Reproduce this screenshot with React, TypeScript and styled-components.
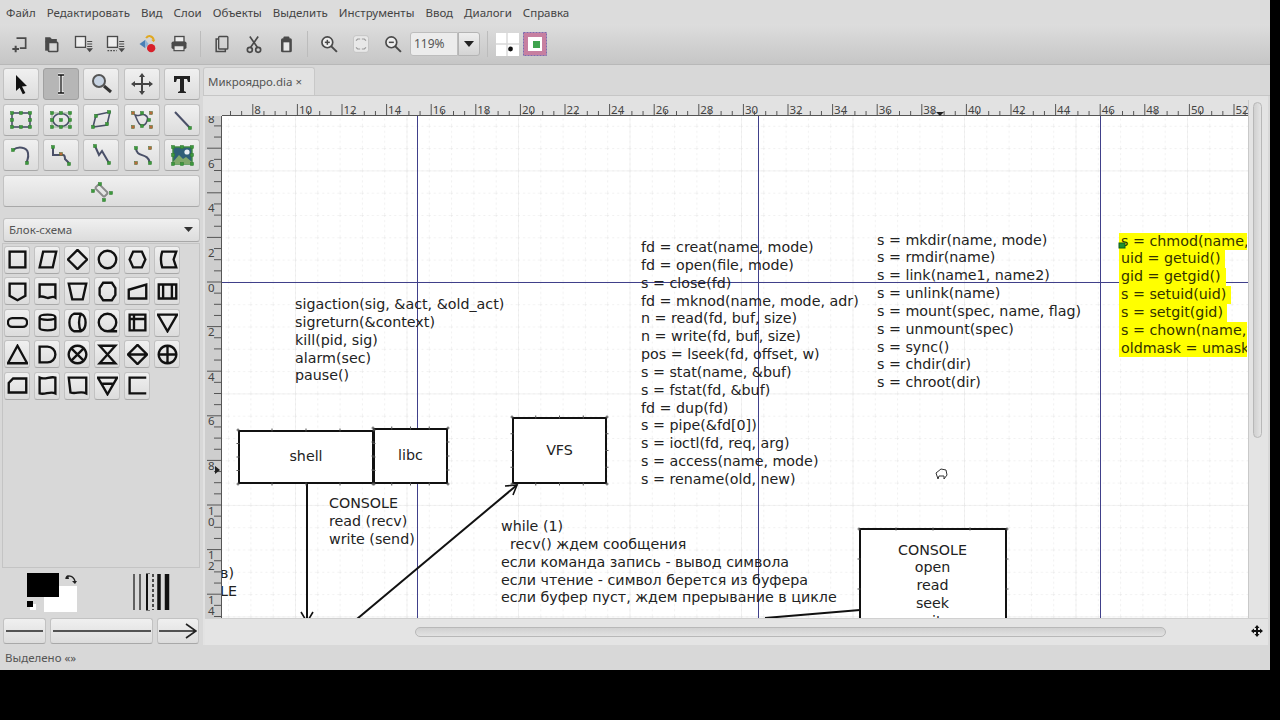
import React from 'react';
import styled, { createGlobalStyle, css } from 'styled-components';

const GlobalStyle = createGlobalStyle`
  html, body {
    margin: 0;
    padding: 0;
    height: 100%;
    background: #000000;
    overflow: hidden;
  }
`;

const uiFont = `"Noto Sans", "Open Sans", sans-serif`;
const canvasFont = `"DejaVu Sans", sans-serif`;
const UNIT = 22.3;

const Window = styled.div`
  width: 1270px;
  height: 670px;
  background: #d8d8d8;
  display: flex;
  flex-direction: column;
  font-family: ${uiFont};
  color: #444444;
  overflow: hidden;
`;

const MenuBar = styled.div`
  height: 24px;
  flex: none;
  display: flex;
  align-items: center;
  padding-left: 6px;
  gap: 11px;
  font-size: 11.5px;
  background: #dcdcdc;
`;

const Toolbar = styled.div`
  height: 41px;
  flex: none;
  box-sizing: border-box;
  display: flex;
  align-items: center;
  padding-left: 3px;
  background: linear-gradient(#dddddd, #c6c6c6);
  border-bottom: 1px solid #b8b8b8;
`;

const ToolIcon = styled.div`
  width: 32px;
  height: 30px;
  flex: none;
  display: flex;
  align-items: center;
  justify-content: center;
  svg {
    width: 20px;
    height: 20px;
  }
`;

const ToolSeparator = styled.div<{ $before?: number; $after?: number }>`
  width: 1px;
  height: 26px;
  flex: none;
  margin: 0 ${(p) => p.$after ?? 5}px 0 ${(p) => p.$before ?? 5}px;
  background: #bcbcbc;
`;

const ZoomEntry = styled.div`
  width: 48px;
  height: 24px;
  flex: none;
  margin-left: 1px;
  box-sizing: border-box;
  padding-left: 3px;
  background: #ececec;
  border: 1px solid #bdbdbd;
  border-radius: 3px 0 0 3px;
  font-size: 12px;
  line-height: 22px;
  color: #555555;
`;

const ZoomArrow = styled.div`
  width: 22px;
  height: 24px;
  flex: none;
  box-sizing: border-box;
  display: flex;
  align-items: center;
  justify-content: center;
  background: linear-gradient(#eeeeee, #d4d4d4);
  border: 1px solid #b4b4b4;
  border-radius: 0 3px 3px 0;
`;

const SnapGap = styled.span`
  width: 4px;
  flex: none;
`;

const Body = styled.div`
  flex: 1;
  min-height: 0;
  display: flex;
`;

const Toolbox = styled.div`
  width: 203px;
  flex: none;
  box-sizing: border-box;
  padding: 3px 3px 1px 3px;
  display: flex;
  flex-direction: column;
`;

const ToolGrid = styled.div`
  display: grid;
  grid-template-columns: repeat(5, 36px);
  grid-auto-rows: 32px;
  column-gap: 4.2px;
  row-gap: 3.6px;
`;

const raised = css`
  box-sizing: border-box;
  background: linear-gradient(#f0f0f0, #dcdcdc);
  border: 1px solid #c2c2c2;
  border-bottom-color: #a8a8a8;
  border-radius: 3px;
`;

const ToolButton = styled.div<{ $active?: boolean; $wide?: boolean }>`
  ${raised}
  display: flex;
  align-items: center;
  justify-content: center;
  ${(p) => p.$wide && 'grid-column: 1 / -1;'}
  ${(p) => p.$active && 'background: #b6b6b6; border-color: #a0a0a0;'}
`;

const SheetSelect = styled.div`
  ${raised}
  height: 24px;
  margin: 11px 0 0 0;
  padding: 0 6px 0 5px;
  display: flex;
  align-items: center;
  justify-content: space-between;
  font-size: 11.5px;
  color: #555555;
`;

const ShapePanel = styled.div`
  flex: 1;
  min-height: 0;
  margin: 1px 0 0 -1px;
  padding: 2px 0 0 1px;
  border: 1px solid #c4c4c4;
  display: grid;
  grid-template-columns: repeat(6, 26px);
  grid-auto-rows: 28px;
  column-gap: 4px;
  row-gap: 3.5px;
  align-content: start;
`;

const ShapeButton = styled.div`
  ${raised}
  display: flex;
  align-items: center;
  justify-content: center;
`;

const ColorRow = styled.div`
  height: 45px;
  flex: none;
  box-sizing: border-box;
  padding: 5px 0 0 24px;
  display: flex;
  align-items: flex-start;
`;

const ColorSwatches = styled.div`
  position: relative;
  width: 60px;
  height: 40px;
`;

const ForeSwatch = styled.div`
  position: absolute;
  left: 0;
  top: 0;
  width: 32px;
  height: 24px;
  background: #000000;
  z-index: 1;
`;

const BackSwatch = styled.div`
  position: absolute;
  left: 17px;
  top: 13px;
  width: 33px;
  height: 26px;
  background: #ffffff;
`;

const MiniSwatch = styled.div<{ $back?: boolean }>`
  position: absolute;
  left: ${(p) => (p.$back ? 3 : 0)}px;
  top: ${(p) => (p.$back ? 31 : 28)}px;
  width: 6px;
  height: 6px;
  background: ${(p) => (p.$back ? '#ffffff' : '#000000')};
  z-index: ${(p) => (p.$back ? 0 : 1)};
`;

const SwapArrows = styled.svg`
  position: absolute;
  left: 37px;
  top: 0;
`;

const LinePatterns = styled.svg`
  margin-left: 46px;
  flex: none;
`;

const LineRow = styled.div`
  height: 26px;
  flex: none;
  margin-top: 5px;
  display: grid;
  grid-template-columns: 43px 103px 42px;
  column-gap: 4px;
`;

const LineButton = styled.div`
  ${raised}
  display: flex;
  align-items: center;
  justify-content: center;
`;

const Workspace = styled.div`
  flex: 1;
  min-width: 0;
  display: flex;
  flex-direction: column;
`;

const TabStrip = styled.div`
  height: 31px;
  flex: none;
  box-sizing: border-box;
  display: flex;
  align-items: flex-end;
  border-bottom: 1px solid #c6c6c6;
`;

const Tab = styled.div`
  width: 112px;
  height: 28px;
  box-sizing: border-box;
  padding: 0 12px 0 4px;
  background: #e2e2e2;
  border: 1px solid #c8c8c8;
  border-bottom: none;
  border-radius: 3px 3px 0 0;
  display: flex;
  align-items: center;
  justify-content: space-between;
  font-size: 11.5px;
  color: #555555;
`;

const Pane = styled.div`
  width: 1065px;
  height: 549px;
  flex: none;
  box-sizing: border-box;
  padding: 4px 0 0 2px;
  background: #e2e2e2;
  display: grid;
  grid-template-columns: 17px 1026px 20px;
  grid-template-rows: 16px 502px 27px;
`;

const RulerCorner = styled.div`
  background: #e2e2e2;
`;

const TopRuler = styled.svg`
  display: block;
  width: 1026px;
  height: 16px;
  overflow: visible;
`;

const SideRuler = styled.svg`
  display: block;
  width: 17px;
  height: 502px;
  background: #cecece;
`;

const VScroll = styled.div`
  grid-row: 1 / 3;
  grid-column: 3;
  box-sizing: border-box;
  padding: 2px 0 0 4px;
  background: #e4e4e4;
  border-left: 1px solid #c9c9c9;
`;

const VThumb = styled.div`
  width: 9px;
  height: 336px;
  box-sizing: border-box;
  background: linear-gradient(90deg, #d0d0d0, #e4e4e4);
  border: 1px solid #b8b8b8;
  border-radius: 5px;
`;

const HScrollRow = styled.div`
  grid-column: 1 / 4;
  position: relative;
  box-sizing: border-box;
  padding: 8px 0 0 210px;
  background: #e4e4e4;
  border-top: 1px solid #d0d0d0;
`;

const HThumb = styled.div`
  width: 751px;
  height: 10px;
  box-sizing: border-box;
  background: linear-gradient(#d0d0d0, #e2e2e2);
  border: 1px solid #b8b8b8;
  border-radius: 5px;
`;

const CornerMark = styled.svg`
  position: absolute;
  right: 5px;
  top: 6px;
`;

const Canvas = styled.div`
  position: relative;
  width: 1026px;
  height: 502px;
  background: #ffffff;
  overflow: hidden;
  font-family: ${canvasFont};
  font-size: 14.25px;
  color: #222222;
`;

const Layer = styled.svg`
  position: absolute;
  left: 0;
  top: 0;
  width: 1026px;
  height: 502px;
`;

const TextBlock = styled.div<{ $x: number; $y: number; $center?: boolean; $w?: number }>`
  position: absolute;
  left: ${(p) => p.$x}px;
  top: ${(p) => p.$y}px;
  ${(p) => p.$w && `width: ${p.$w}px;`}
  line-height: 17.85px;
  white-space: pre;
  text-align: ${(p) => (p.$center ? 'center' : 'left')};
`;

const Highlight = styled.div<{ $x: number; $y: number }>`
  position: absolute;
  left: ${(p) => p.$x}px;
  top: ${(p) => p.$y}px;
  width: 128px;
  line-height: 17.85px;
  white-space: pre;
`;

const HighlightLine = styled.div<{ $w?: number }>`
  width: ${(p) => (p.$w ? `${p.$w}px` : '100%')};
  height: 17.85px;
  padding-left: 2px;
  box-sizing: border-box;
  overflow: hidden;
  background: #ffff00;
  color: #333300;
`;

const Node = styled.div<{ $x: number; $y: number; $w: number; $h: number }>`
  position: absolute;
  left: ${(p) => p.$x}px;
  top: ${(p) => p.$y}px;
  width: ${(p) => p.$w}px;
  height: ${(p) => p.$h}px;
  box-sizing: border-box;
  padding-bottom: 2px;
  border: 2px solid #111111;
  background: #ffffff;
  display: flex;
  align-items: center;
  justify-content: center;
`;

const StatusBar = styled.div`
  height: 25px;
  flex: none;
  display: flex;
  align-items: center;
  padding-left: 5px;
  font-size: 11.5px;
  color: #555555;
`;

// ---- icons ----

const Glyph = ({ w = 24, h = 24, children }: { w?: number; h?: number; children: React.ReactNode }) => (
  <svg width={w} height={h} viewBox={`0 0 ${w} ${h}`}>
    {children}
  </svg>
);

const DARK = '#4a4a4a';

const topIcons: React.ReactNode[] = [
  <Glyph key="new">
    <path d="M9 5h11v12H13" fill="none" stroke={DARK} strokeWidth="2" />
    <path d="M8 14v8M4 18h8" stroke={DARK} strokeWidth="2.4" />
  </Glyph>,
  <Glyph key="open">
    <path d="M5 4h6l2 2h6v4H5z" fill={DARK} />
    <rect x="5" y="9" width="4" height="11" fill={DARK} />
    <rect x="9" y="10" width="11" height="11" rx="1" fill="#d8d8d8" stroke={DARK} strokeWidth="2" />
  </Glyph>,
  <Glyph key="save">
    <rect x="3" y="3" width="12" height="13" fill="#eeeeee" stroke={DARK} strokeWidth="1.6" />
    <path d="M17 9h6M17 12h6M17 15h6" stroke={DARK} strokeWidth="1.4" />
    <path d="M16 17h8l-4 5z" fill={DARK} />
  </Glyph>,
  <Glyph key="saveas">
    <rect x="3" y="3" width="12" height="13" fill="#eeeeee" stroke={DARK} strokeWidth="1.6" />
    <path d="M17 9h6M17 12h6M17 15h6" stroke={DARK} strokeWidth="1.4" />
    <path d="M16 17h8l-4 5z" fill={DARK} />
    <path d="M3 20h11" stroke={DARK} strokeWidth="1.4" strokeDasharray="2 1.4" />
  </Glyph>,
  <Glyph key="export">
    <path d="M3 12l7-5v10z" fill="#4a7fb5" />
    <path d="M10 7l4 5-4 5z" fill="#8fb4d6" />
    <path d="M11 5c2-4 8-3 9 2" fill="none" stroke="#e0a820" strokeWidth="2.4" />
    <path d="M17 7h5l-2 3z" fill="#e0a820" />
    <circle cx="17" cy="17" r="5" fill="#d8202a" />
  </Glyph>,
  <Glyph key="print">
    <rect x="7" y="3" width="11" height="7" fill="#eeeeee" stroke={DARK} strokeWidth="1.6" />
    <rect x="3" y="9" width="18" height="9" rx="2" fill={DARK} />
    <rect x="6" y="14" width="12" height="6" fill="#e4e4e4" stroke={DARK} strokeWidth="1.4" />
  </Glyph>,
];

const editIcons: React.ReactNode[] = [
  <Glyph key="copy">
    <rect x="8" y="3" width="11" height="15" rx="1" fill="none" stroke={DARK} strokeWidth="1.6" />
    <path d="M8 6H5v15h11v-3" fill="none" stroke={DARK} strokeWidth="1.8" />
  </Glyph>,
  <Glyph key="cut">
    <path d="M7 3l9 13M17 3L8 16" stroke={DARK} strokeWidth="2" />
    <circle cx="7" cy="19" r="3" fill="none" stroke={DARK} strokeWidth="2" />
    <circle cx="17" cy="19" r="3" fill="none" stroke={DARK} strokeWidth="2" />
  </Glyph>,
  <Glyph key="paste">
    <rect x="6" y="5" width="13" height="17" rx="2" fill={DARK} />
    <rect x="9" y="3" width="7" height="5" rx="1" fill={DARK} />
    <rect x="9" y="10" width="7" height="10" fill="#e8e8e8" />
  </Glyph>,
];

const Magnifier = ({ sign }: { sign: '+' | '-' }) => (
  <Glyph>
    <circle cx="10" cy="10" r="6.5" fill="#eeeeee" stroke={DARK} strokeWidth="2" />
    <path d="M14.5 14.5l7 7" stroke={DARK} strokeWidth="2.4" />
    <path d="M7 10h6" stroke={DARK} strokeWidth="1.8" />
    {sign === '+' && <path d="M10 7v6" stroke={DARK} strokeWidth="1.8" />}
  </Glyph>
);

const BestFit = () => (
  <Glyph>
    <rect x="3" y="2" width="18" height="20" rx="3" fill="#e8e8e8" stroke="#c0c0c0" />
    <path d="M6 8l2-2h3M18 8l-2-2h-3M6 16l2 2h3M18 16l-2 2h-3" fill="none" stroke="#9a9a9a" strokeWidth="1.4" />
  </Glyph>
);

const SnapGrid = () => (
  <svg width="23" height="23" viewBox="0 0 23 23">
    <rect width="23" height="23" fill="#ffffff" />
    <path d="M11 0v23M0 11h23" stroke="#d8d8d8" strokeWidth="1.4" />
    <circle cx="14.5" cy="16" r="2.4" fill="#111111" />
  </svg>
);

const SnapObject = () => (
  <svg width="24" height="24" viewBox="0 0 24 24">
    <rect x="0.5" y="0.5" width="23" height="23" fill="#c77fa0" stroke="#7b6ab0" strokeDasharray="2 1" />
    <rect x="5" y="5" width="14" height="14" fill="#ffffff" />
    <rect x="10" y="9" width="7" height="7" fill="#3fa34d" />
  </svg>
);

const dot = (x: number, y: number, key: string, fill = '#3c9a3c') => (
  <rect key={key} x={x - 1.6} y={y - 1.6} width="3.2" height="3.2" fill={fill} stroke="#2f6f2f" strokeWidth="0.4" />
);
const dots = (pts: number[][], fill?: string) => pts.map(([x, y], i) => dot(x, y, `d${i}`, fill));
const LINE = '#4a5068';

const toolboxIcons: { node: React.ReactNode; active?: boolean; wide?: boolean }[] = [
  {
    node: (
      <Glyph>
        <path d="M7 3l11 11-5 .6 3.4 6.4-2.6 1.2-3.2-6.4L7 19z" fill="#111111" />
      </Glyph>
    ),
  },
  {
    active: true,
    node: (
      <Glyph>
        <path d="M9 3h6M12 3v18M9 21h6" stroke="#ffffff" strokeWidth="3" />
        <path d="M9 3h6M12 3v18M9 21h6" stroke="#111111" strokeWidth="1.3" />
      </Glyph>
    ),
  },
  {
    node: (
      <Glyph>
        <circle cx="10" cy="9" r="6" fill="#c7d3e2" stroke="#555555" strokeWidth="2" />
        <path d="M15 14l7 6" stroke="#333333" strokeWidth="3" />
      </Glyph>
    ),
  },
  {
    node: (
      <Glyph>
        <path d="M12 3v18M3 12h18" stroke="#444444" strokeWidth="2" />
        <path d="M12 1l3 4H9zM12 23l3-4H9zM1 12l4-3v6zM23 12l-4-3v6z" fill="#444444" />
      </Glyph>
    ),
  },
  {
    node: (
      <Glyph>
        <path d="M4 4h16v6h-2l-1-3h-3v12l2 1v1H8v-1l2-1V7H7l-1 3H4z" fill="#222222" />
      </Glyph>
    ),
  },
  {
    node: (
      <Glyph>
        <rect x="3" y="5" width="18" height="14" fill="none" stroke={LINE} strokeWidth="1.6" />
        {dots([[3, 5], [12, 5], [21, 5], [3, 12], [21, 12], [3, 19], [12, 19], [21, 19]])}
      </Glyph>
    ),
  },
  {
    node: (
      <Glyph>
        <ellipse cx="12" cy="12" rx="8" ry="6.5" fill="none" stroke={LINE} strokeWidth="1.6" />
        <rect x="3" y="5" width="18" height="14" fill="none" stroke="#7f9f7f" strokeWidth="0.8" />
        {dots([[3, 5], [12, 5], [21, 5], [3, 12], [12, 12], [21, 12], [3, 19], [12, 19], [21, 19]])}
      </Glyph>
    ),
  },
  {
    node: (
      <Glyph>
        <path d="M7 7l14-3-3 13-14 2z" fill="none" stroke={LINE} strokeWidth="1.6" />
        {dots([[7, 8], [20, 4], [18, 16], [4, 19]])}
      </Glyph>
    ),
  },
  {
    node: (
      <Glyph>
        <path d="M5 7c4 2 7-2 10 0s3 3 2 6-3 5-6 4-4-6-6-10z" fill="none" stroke={LINE} strokeWidth="1.6" />
        {dots([[3, 5], [21, 5], [21, 19], [3, 19]], '#b86a3a')}
        {dots([[12, 5], [19, 12], [12, 18]])}
      </Glyph>
    ),
  },
  {
    node: (
      <Glyph>
        <path d="M5 4l15 16" stroke={LINE} strokeWidth="2" />
        {dots([[20, 20]])}
      </Glyph>
    ),
  },
  {
    node: (
      <Glyph>
        <path d="M4 7c5-4 14-3 15 3s-1 6-1 9" fill="none" stroke={LINE} strokeWidth="2" />
        {dots([[4, 7], [18, 20]])}
      </Glyph>
    ),
  },
  {
    node: (
      <Glyph>
        <path d="M4 4v8h8l2 0c2 0 2 2 2 4l4 4" fill="none" stroke={LINE} strokeWidth="2" />
        {dots([[4, 4], [20, 21]])}
        {dots([[12, 11]], '#b86a3a')}
      </Glyph>
    ),
  },
  {
    node: (
      <Glyph>
        <path d="M6 3l4 9 3-4 7 12" fill="none" stroke={LINE} strokeWidth="2" />
        {dots([[6, 3], [20, 20]])}
      </Glyph>
    ),
  },
  {
    node: (
      <Glyph>
        <path d="M6 5c0 10 12 4 14 15" fill="none" stroke={LINE} strokeWidth="2" />
        {dots([[6, 5], [20, 20]])}
        {dots([[20, 5], [6, 20]], '#b86a3a')}
      </Glyph>
    ),
  },
  {
    node: (
      <Glyph>
        <rect x="3" y="4" width="19" height="17" fill="#2f5f78" stroke="#3c8a3c" strokeWidth="1.4" />
        <path d="M3 19l6-7 4 4 3-2 6 5v2H3z" fill="#7fa86a" />
        <circle cx="17" cy="9" r="2.6" fill="#e8eef4" />
        {dots([[3, 4], [12, 4], [22, 4], [3, 12], [22, 12], [3, 21], [12, 21], [22, 21]])}
      </Glyph>
    ),
  },
  {
    wide: true,
    node: (
      <Glyph>
        <path d="M8 9l9 9M12 5l9 9" stroke="#8a8a8a" strokeWidth="1.8" transform="translate(-2 0)" />
        <path d="M8 9l4-4M17 18l4-4" stroke="#8a8a8a" strokeWidth="1.8" transform="translate(-2 0)" />
        {dots([[4, 12], [11, 5], [22, 14], [15, 21]])}
      </Glyph>
    ),
  },
];

const shapePaths: React.ReactNode[] = [
  <rect x="3" y="3" width="18" height="18" />,
  <path d="M7 3h15l-4 18H3z" />,
  <path d="M12 1l11 11-11 11L1 12z" />,
  <circle cx="12" cy="12" r="10" />,
  <path d="M7 3h10l4 9-4 9H7l-4-9z" />,
  <path d="M6 3h16l-3 9 3 9H6q-3-9 0-18z" />,
  <path d="M3 3h18v14l-9 5-9-5z" />,
  <path d="M3 4h18v15c-4-3-7 2-10 0-3-1-5-2-8-1z" />,
  <path d="M2 3h20l-4 18H6z" />,
  <path d="M7 2h10l4 6v8l-4 6H7l-4-6V8z" />,
  <path d="M2 10l20-6v16H2z" />,
  <path d="M2 4h20v16H2zM7 4v16M17 4v16" />,
  <rect x="1" y="7" width="22" height="10" rx="5" />,
  <path d="M3 6c0-4 18-4 18 0v12c0 4-18 4-18 0zM3 6c0 4 18 4 18 0" />,
  <path d="M8 2h8c7 3 7 17 0 20H8C1 19 1 5 8 2zM16 2c-3 5-3 15 0 20" />,
  <path d="M12 2a10 10 0 1 0 0 20h11M12 22a10 10 0 0 0 0-20" />,
  <path d="M3 3h18v18H3zM8 3v18M3 8h18" />,
  <path d="M1 3h22L12 22z" />,
  <path d="M12 2l11 20H1z" />,
  <path d="M3 3h9a9 9 0 0 1 0 18H3z" />,
  <path d="M12 2a10 10 0 1 0 .01 0zM5 5l14 14M19 5L5 19" />,
  <path d="M3 2h18L3 22h18z" />,
  <path d="M12 1l11 11-11 11L1 12zM1 12h22" />,
  <path d="M12 2a10 10 0 1 0 .01 0zM12 2v20M2 12h20" />,
  <path d="M7 4h15v16H2v-11z" />,
  <path d="M3 3c6 3 12-2 18 0v18c-6-3-12 2-18 0z" />,
  <path d="M2 3h20v18c-6-3-12 1-18-1z" />,
  <path d="M1 3h22L12 22zM6 10h12" />,
  <path d="M22 3H3v18h19" />,
];

// ---- canvas ----

const cx = (screen: number) => screen - 222;
const cy = (screen: number) => screen - 116;

const tickX = (n: number) => cx(342) + (n - 12) * UNIT;
const tickY = (n: number) => cy(282) + n * UNIT;

const TopRulerDrawing = () => {
  const ticks: React.ReactNode[] = [];
  for (let n = 7; n <= 52.5; n += 0.5) {
    const major = Number.isInteger(n) && n % 2 === 0;
    const x = tickX(n);
    ticks.push(
      <line key={n} x1={x} x2={x} y1={major ? 4 : 11} y2={15} stroke="#555555" strokeWidth="1" />,
    );
    if (major) {
      ticks.push(
        <text key={`t${n}`} x={x + 1.5} y={13.5} fontSize="11.5" fill="#444444" fontFamily={uiFont}>
          {n}
        </text>,
      );
    }
  }
  return (
    <TopRuler viewBox="0 0 1026 16">
      {ticks}
      <line x1="0" x2="1026" y1="15.5" y2="15.5" stroke="#555555" />
      <path d="M714 12h8l-4 4z" fill="#222222" />
    </TopRuler>
  );
};

const SideRulerDrawing = () => {
  const ticks: React.ReactNode[] = [];
  for (let n = -8; n <= 15; n += 0.5) {
    const major = Number.isInteger(n) && n % 2 === 0;
    const y = tickY(n);
    ticks.push(
      <line key={n} y1={y} y2={y} x1={major ? 2 : 9} x2={16} stroke="#555555" strokeWidth="1" />,
    );
    if (major && n <= 14) {
      // negative labels are stacked under a minus sign, so the digits sit lower
      const base = n < 0 ? 19.5 : 9.5;
      const digits = String(Math.abs(n)).split('');
      digits.forEach((d, i) => {
        ticks.push(
          <text key={`t${n}-${i}`} x={3} y={y + base + i * 11} fontSize="11.5" fill="#444444" fontFamily={uiFont}>
            {d}
          </text>,
        );
      });
    }
  }
  return (
    <SideRuler viewBox="0 0 17 502">
      {ticks}
      <line x1="16.5" x2="16.5" y1="0" y2="502" stroke="#555555" />
      <path d="M10 350l5 4-5 4z" fill="#222222" />
    </SideRuler>
  );
};

const GridLayer = () => (
  <Layer>
    <defs>
      <pattern id="minor" width={UNIT} height={UNIT} patternUnits="userSpaceOnUse" x="73" y="54.4">
        <path d={`M0 0V${UNIT}M0 0H${UNIT}`} fill="none" stroke="#e2e2e2" strokeDasharray="2 3" />
      </pattern>
      <pattern id="major" width={UNIT * 5} height={UNIT * 5} patternUnits="userSpaceOnUse" x="73" y="54.4">
        <path d={`M0 0V${UNIT * 5}M0 0H${UNIT * 5}`} fill="none" stroke="#e6e6e6" />
      </pattern>
    </defs>
    <rect width="1026" height="502" fill="url(#minor)" />
    <rect width="1026" height="502" fill="url(#major)" />
    <path
      d={`M${cx(417) + 0.5} 0V502M${cx(758) + 0.5} 0V502M${cx(1100) + 0.5} 0V502M0 ${cy(282) + 0.5}H1026`}
      stroke="#40408a"
      strokeWidth="1"
    />
  </Layer>
);

const boxes = [
  { x: 238, y: 430, w: 136, h: 54, label: 'shell' },
  { x: 373, y: 428, w: 75, h: 56, label: 'libc' },
  { x: 512, y: 417, w: 95, h: 67, label: 'VFS' },
];

const ConnectorLayer = () => {
  const marks: React.ReactNode[] = [];
  [...boxes, { x: 859, y: 529, w: 148, h: 120, label: '' }].forEach((b, i) => {
    [0, 0.25, 0.5, 0.75, 1].forEach((f) => {
      const mx = cx(b.x) + b.w * f;
      const my = cy(b.y) + b.h * f;
      marks.push(
        <path key={`${i}-h-${f}`} d={`M${mx} ${cy(b.y) - 1.5}v3M${mx} ${cy(b.y) + b.h - 1.5}v3`} stroke="#555555" />,
        <path key={`${i}-v-${f}`} d={`M${cx(b.x) - 1.5} ${my}h3M${cx(b.x) + b.w - 1.5} ${my}h3`} stroke="#555555" />,
      );
    });
  });
  return (
    <Layer>
      <g fill="none" stroke="#111111" strokeWidth="2">
        <path d={`M${cx(307)} ${cy(483)}V${cy(620)}`} />
        <path d={`M${cx(301)} ${cy(612)}l6 10l6 -10`} strokeWidth="1.6" />
        <path d={`M${cx(345)} ${cy(629)}L${cx(517)} ${cy(485)}`} />
        <path d={`M${cx(505)} ${cy(486)}l12 -1l-4 10`} strokeWidth="1.6" />
        <path d={`M${cx(765)} ${cy(618)}L${cx(860)} ${cy(610)}`} />
      </g>
      {marks}
      <path d={`M${cx(936)} ${cy(473)}l5 -4l5 1l1 5l-3 4v-3h-5l-1 3z`} fill="none" stroke="#333333" />
      <rect x={cx(1119)} y={cy(243)} width="6" height="5" fill="#1f8f2f" stroke="#0c5c1a" />
    </Layer>
  );
};

const signalLines = `sigaction(sig, &act, &old_act)
sigreturn(&context)
kill(pid, sig)
alarm(sec)
pause()`;

const fileLines = `fd = creat(name, mode)
fd = open(file, mode)
s = close(fd)
fd = mknod(name, mode, adr)
n = read(fd, buf, size)
n = write(fd, buf, size)
pos = lseek(fd, offset, w)
s = stat(name, &buf)
s = fstat(fd, &buf)
fd = dup(fd)
s = pipe(&fd[0])
s = ioctl(fd, req, arg)
s = access(name, mode)
s = rename(old, new)`;

const dirLines = `s = mkdir(name, mode)
s = rmdir(name)
s = link(name1, name2)
s = unlink(name)
s = mount(spec, name, flag)
s = unmount(spec)
s = sync()
s = chdir(dir)
s = chroot(dir)`;

const highlighted: { text: string; w?: number }[] = [
  { text: 's = chmod(name,' },
  { text: 'uid = getuid()', w: 106 },
  { text: 'gid = getgid()', w: 107 },
  { text: 's = setuid(uid)', w: 112 },
  { text: 's = setgit(gid)', w: 108 },
  { text: 's = chown(name,' },
  { text: 'oldmask = umask' },
];

const consoleLines = `CONSOLE
read (recv)
write (send)`;

const loopLines = `while (1)
  recv() ждем сообщения
если команда запись - вывод символа
если чтение - символ берется из буфера
если буфер пуст, ждем прерывание в цикле`;

const menuItems = ['Файл', 'Редактировать', 'Вид', 'Слои', 'Объекты', 'Выделить', 'Инструменты', 'Ввод', 'Диалоги', 'Справка'];

const App = (): React.ReactElement => (
  <Window>
    <GlobalStyle />
    <MenuBar>
      {menuItems.map((m) => (
        <span key={m}>{m}</span>
      ))}
    </MenuBar>
    <Toolbar>
      {topIcons.map((icon, i) => (
        <ToolIcon key={i}>{icon}</ToolIcon>
      ))}
      <ToolSeparator />
      {editIcons.map((icon, i) => (
        <ToolIcon key={i}>{icon}</ToolIcon>
      ))}
      <ToolSeparator />
      <ToolIcon>
        <Magnifier sign="+" />
      </ToolIcon>
      <ToolIcon>
        <BestFit />
      </ToolIcon>
      <ToolIcon>
        <Magnifier sign="-" />
      </ToolIcon>
      <ZoomEntry>119%</ZoomEntry>
      <ZoomArrow>
        <svg width="10" height="6" viewBox="0 0 10 6">
          <path d="M0 0h10L5 6z" fill="#222222" />
        </svg>
      </ZoomArrow>
      <ToolSeparator $before={7} $after={8} />
      <SnapGrid />
      <SnapGap />
      <SnapObject />
    </Toolbar>
    <Body>
      <Toolbox>
        <ToolGrid>
          {toolboxIcons.map((t, i) => (
            <ToolButton key={i} $active={t.active} $wide={t.wide}>
              {t.node}
            </ToolButton>
          ))}
        </ToolGrid>
        <SheetSelect>
          <span>Блок-схема</span>
          <svg width="9" height="5" viewBox="0 0 9 5">
            <path d="M0 0h9L4.500 5z" fill="#333333" />
          </svg>
        </SheetSelect>
        <ShapePanel>
          {shapePaths.map((p, i) => (
            <ShapeButton key={i}>
              <svg width="21" height="21" viewBox="0 0 24 24" fill="none" stroke="#111111" strokeWidth="2.7">
                {p}
              </svg>
            </ShapeButton>
          ))}
        </ShapePanel>
        <ColorRow>
          <ColorSwatches>
            <ForeSwatch />
            <BackSwatch />
            <MiniSwatch />
            <MiniSwatch $back />
            <SwapArrows width="14" height="14" viewBox="0 0 14 14">
              <path d="M2 5c1-3 7-3 9 3" fill="none" stroke="#222222" strokeWidth="1.4" />
              <path d="M1 6l3-4 1 4zM8 8h5l-2 3z" fill="#222222" />
            </SwapArrows>
          </ColorSwatches>
          <LinePatterns width="38" height="38" viewBox="0 0 38 38">
            <path d="M1 1v36M7 1v36" stroke="#111111" strokeWidth="1.2" />
            <path d="M14 1v36" stroke="#111111" strokeWidth="2" />
            <path d="M17 0h-3v38h3" fill="none" stroke="#111111" strokeWidth="1" strokeDasharray="2 1" />
            <path d="M20 1v36" stroke="#111111" strokeWidth="1.4" strokeDasharray="3 2" />
            <path d="M26 1v36" stroke="#111111" strokeWidth="3.500" />
            <path d="M34 1v36" stroke="#111111" strokeWidth="4.500" />
          </LinePatterns>
        </ColorRow>
        <LineRow>
          <LineButton>
            <svg width="37" height="4" viewBox="0 0 37 4">
              <path d="M0 2h37" stroke="#222222" strokeWidth="1.6" />
            </svg>
          </LineButton>
          <LineButton>
            <svg width="98" height="4" viewBox="0 0 98 4">
              <path d="M0 2h98" stroke="#222222" strokeWidth="1.6" />
            </svg>
          </LineButton>
          <LineButton>
            <svg width="38" height="16" viewBox="0 0 38 16">
              <path d="M0 8h36M27 1l10 7l-10 7" fill="none" stroke="#222222" strokeWidth="1.6" />
            </svg>
          </LineButton>
        </LineRow>
      </Toolbox>
      <Workspace>
        <TabStrip>
          <Tab>
            <span>Микроядро.dia</span>
            <span>×</span>
          </Tab>
        </TabStrip>
        <Pane>
          <RulerCorner />
          <TopRulerDrawing />
          <VScroll>
            <VThumb />
          </VScroll>
          <SideRulerDrawing />
          <Canvas>
            <GridLayer />
            <TextBlock $x={cx(295)} $y={cy(296)}>{signalLines}</TextBlock>
            <TextBlock $x={cx(641)} $y={cy(239)}>{fileLines}</TextBlock>
            <TextBlock $x={cx(877)} $y={cy(231.5)}>{dirLines}</TextBlock>
            <Highlight $x={cx(1119)} $y={cy(232.5)}>
              {highlighted.map((h) => (
                <HighlightLine key={h.text} $w={h.w}>
                  {h.text}
                </HighlightLine>
              ))}
            </Highlight>
            {boxes.map((b) => (
              <Node key={b.label} $x={cx(b.x)} $y={cy(b.y)} $w={b.w} $h={b.h}>
                {b.label}
              </Node>
            ))}
            <Node $x={cx(859)} $y={cy(528)} $w={148} $h={130} />
            <TextBlock $x={cx(859)} $y={cy(541.5)} $center $w={147}>{`CONSOLE
open
read
seek
write`}</TextBlock>
            <TextBlock $x={cx(329)} $y={cy(495)}>{consoleLines}</TextBlock>
            <TextBlock $x={cx(501)} $y={cy(518)}>{loopLines}</TextBlock>
            <TextBlock $x={-2} $y={cy(565)}>{`в)
LE`}</TextBlock>
            <ConnectorLayer />
          </Canvas>
          <HScrollRow>
            <HThumb />
            <CornerMark width="12" height="12" viewBox="0 0 12 12">
              <path d="M6 1v10M1 6h10" stroke="#111111" strokeWidth="2" />
              <path d="M6 0l2.500 3h-5zM6 12l2.500-3h-5zM0 6l3-2.500v5zM12 6L9 3.500v5z" fill="#111111" />
            </CornerMark>
          </HScrollRow>
        </Pane>
      </Workspace>
    </Body>
    <StatusBar>Выделено «»</StatusBar>
  </Window>
);

export default App;
